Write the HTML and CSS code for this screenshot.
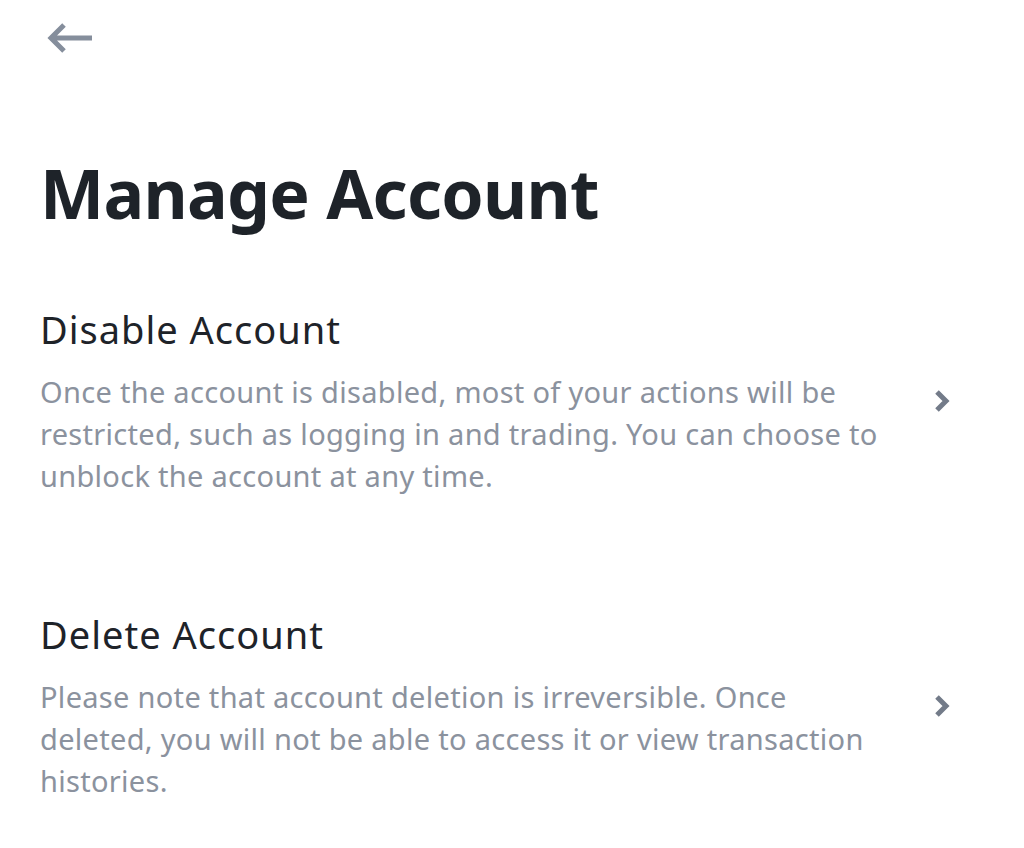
FILE: index.html
```html
<!DOCTYPE html>
<html lang="en">
<head>
    <meta charset="UTF-8">
    <meta name="viewport" content="width=device-width, initial-scale=1.0">
    <title>Manage Account</title>
    <link rel="stylesheet" href="styles.css">
</head>
<body>

    <header class="topbar">
        <button class="backButton" aria-label="Back">
            <svg width="50" height="32" viewBox="0 0 50 32">
                <path d="M47 16H6M19 3L6 16l13 13" fill="none" stroke="#858e9c" stroke-width="5" stroke-linecap="butt" stroke-linejoin="miter"/>
            </svg>
        </button>
    </header>

    <h1 class="title">Manage Account</h1>

    <div class="options">
        <a class="option" href="#">
            <div class="optionText">
                <h2>Disable Account</h2>
                <p>Once the account is disabled, most of your actions will be restricted, such as logging in and trading. You can choose to unblock the account at any time.</p>
            </div>
            <svg class="chevron" width="20" height="24" viewBox="0 0 20 24">
                <path d="M5 3l9 9-9 9" fill="none" stroke="#737b89" stroke-width="5"/>
            </svg>
        </a>

        <a class="option" href="#">
            <div class="optionText">
                <h2>Delete Account</h2>
                <p>Please note that account deletion is irreversible. Once deleted, you will not be able to access it or view transaction histories.</p>
            </div>
            <svg class="chevron" width="20" height="24" viewBox="0 0 20 24">
                <path d="M5 3l9 9-9 9" fill="none" stroke="#737b89" stroke-width="5"/>
            </svg>
        </a>
    </div>

</body>
</html>
```

FILE: styles.css
```css
*{
    box-sizing: border-box;
    margin: 0;
    padding: 0;
}

body{
    background: #ffffff;
    color: #1e2329;
    font-family: "Noto Sans", sans-serif;
    padding: 0 40px;
}

.topbar{
    height: 80px;
    padding-top: 22px;
}

.backButton{
    background: none;
    border: none;
    padding: 0 0 0 5px;
    cursor: pointer;
}

.title{
    margin-top: 68px;
    font-size: 68px;
    font-weight: 700;
    line-height: 90px;
    letter-spacing: -0.7px;
}

.options{
    display: flex;
    flex-direction: column;
    gap: 113px;
    margin-top: 67px;
}

.option{
    display: flex;
    align-items: center;
    justify-content: space-between;
    text-decoration: none;
    color: inherit;
}

.optionText{
    width: 850px;
}

.optionText h2{
    font-size: 38px;
    font-weight: 400;
    line-height: 48px;
    letter-spacing: 1px;
    margin-bottom: 18px;
}

.optionText p{
    font-size: 29px;
    line-height: 42px;
    letter-spacing: 0.3px;
    color: #8b929e;
}

.chevron{
    margin-right: 32px;
}
```
